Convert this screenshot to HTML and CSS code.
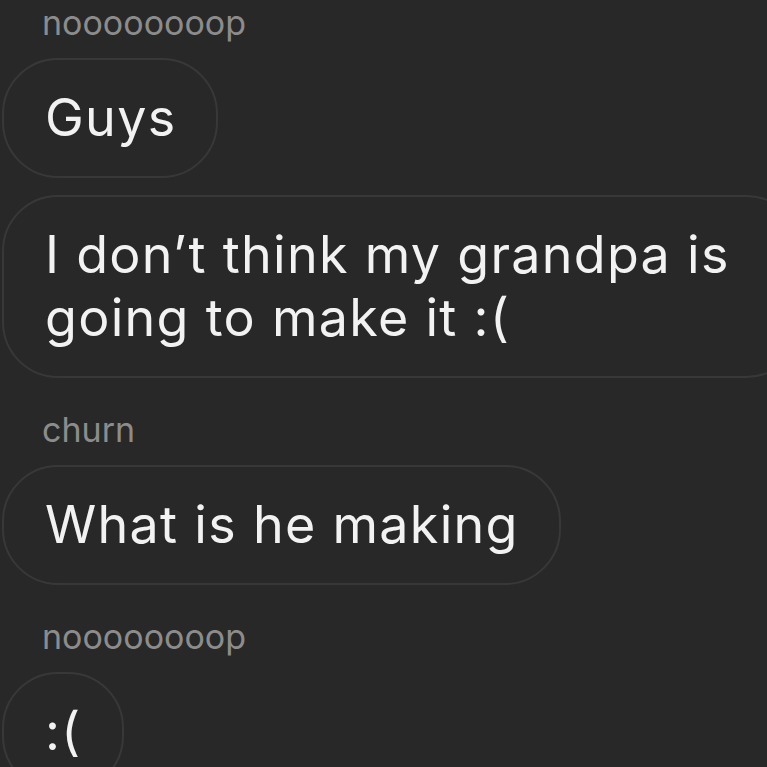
FILE: index.html
```html
<!DOCTYPE html>
<html lang="en">
	<head>
		<meta charset="UTF-8" />
		<meta name="viewport" content="width=device-width, initial-scale=1.0" />
		<title>Chat</title>
		<link rel="stylesheet" href="styles.css">
	</head>
	<body>
		<div class="chat">
			<div class="name">noooooooop</div>
			<div class="bubble">Guys</div>
			<div class="bubble">I don’t think my grandpa is going to make it :(</div>

			<div class="name">churn</div>
			<div class="bubble">What is he making</div>

			<div class="name">noooooooop</div>
			<div class="bubble">:(</div>
		</div>
	</body>
</html>
```
FILE: styles.css
```css
* {
	margin: 0;
	padding: 0;
	box-sizing: border-box;
}
html,
body {
	height: 100%;
	overflow: hidden;
}
body {
	background: #282828;
	font-family: Inter, "Liberation Sans", sans-serif;
	color: #f2f2f2;
}

/* wider than the window: long bubbles run off the right edge */
.chat {
	width: 840px;
	display: flex;
	flex-direction: column;
	align-items: flex-start;
	padding: 3px 0 0 2px;
}

.name {
	font-size: 34px;
	line-height: 40px;
	color: #8c8c8c;
	padding-left: 40px;
	margin-bottom: 15px;
}

.bubble {
	font-size: 52px;
	line-height: 63px;
	letter-spacing: 1.3px;
	padding: 26px 40px 27px 41px;
	border: 2px solid #383838;
	border-radius: 56px;
	max-width: 800px;
	margin-bottom: 17px;
}
.bubble + .name {
	margin-top: 15px;
}
```
